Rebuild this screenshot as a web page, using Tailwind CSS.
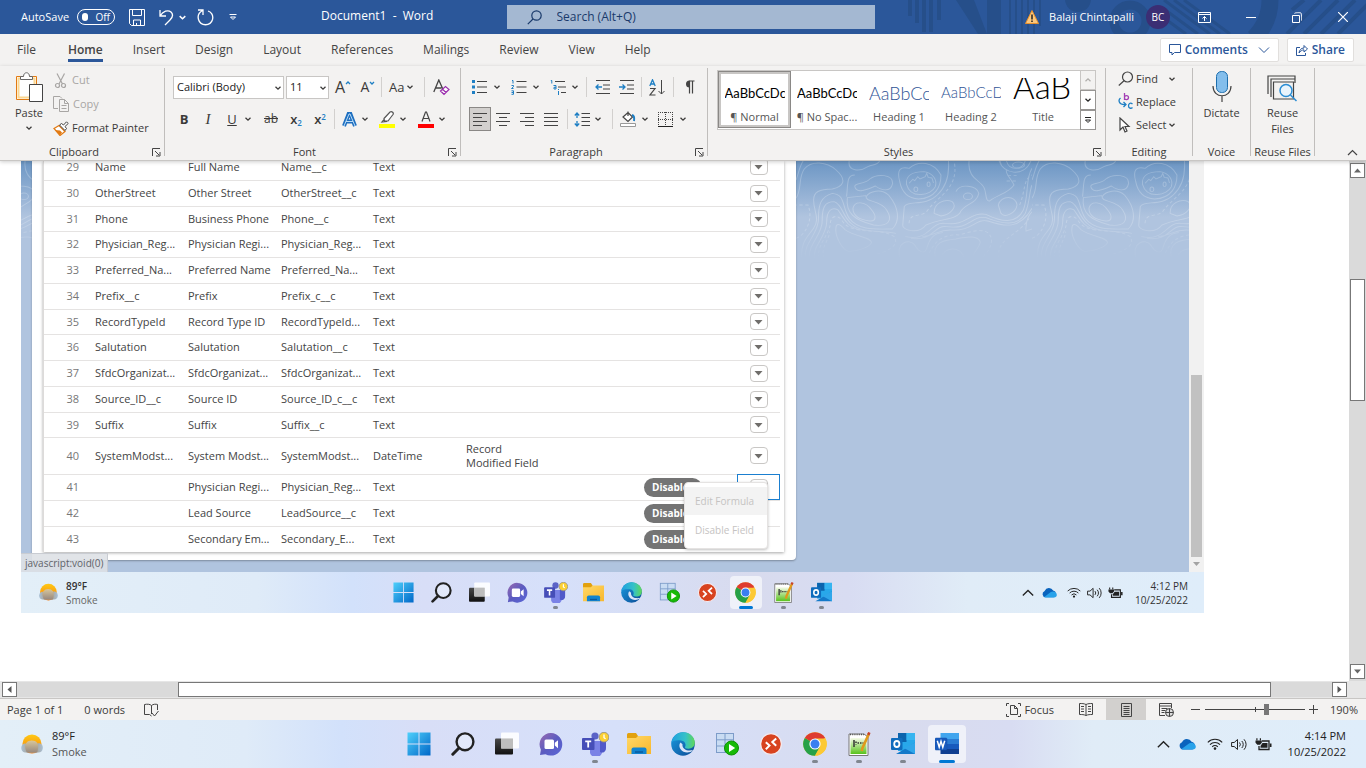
<!DOCTYPE html>
<html lang="en">
<head>
    <meta charset="UTF-8">
    <meta name="viewport" content="width=device-width, initial-scale=1.0">
    <title>Document1 - Word</title>
    <script src="https://cdn.jsdelivr.net/npm/@tailwindcss/browser@4"></script>
</head>
<body class="flex flex-col h-screen overflow-hidden bg-white text-[#3b3a39] text-[11px] leading-4 font-['Open_Sans','Noto_Sans',sans-serif]">

    <!-- Shared icons -->
    <svg class="absolute w-0 h-0" aria-hidden="true">
        <defs>
            <linearGradient id="g-win" x1="0" y1="0" x2="1" y2="1"><stop offset="0" stop-color="#4fd0fb"/><stop offset="1" stop-color="#0067c8"/></linearGradient>
            <linearGradient id="g-dark" x1="0" y1="0" x2="0" y2="1"><stop offset="0" stop-color="#4a4a4a"/><stop offset="1" stop-color="#111"/></linearGradient>
            <linearGradient id="g-chat" x1="0" y1="0" x2="1" y2="1"><stop offset="0" stop-color="#9a6bb0"/><stop offset="0.5" stop-color="#5b5bc0"/><stop offset="1" stop-color="#5a67d8"/></linearGradient>
            <linearGradient id="g-folder" x1="0" y1="0" x2="1" y2="1"><stop offset="0" stop-color="#ffd868"/><stop offset="1" stop-color="#f8b72c"/></linearGradient>
            <linearGradient id="g-edge1" x1="0" y1="0" x2="1" y2="0"><stop offset="0" stop-color="#1f9fe0"/><stop offset="0.6" stop-color="#35c1c8"/><stop offset="1" stop-color="#5fd858"/></linearGradient>
            <linearGradient id="g-edge2" x1="0" y1="0" x2="1" y2="1"><stop offset="0" stop-color="#1b9de2"/><stop offset="1" stop-color="#0c4a94"/></linearGradient>
            <linearGradient id="g-npp" x1="0" y1="0" x2="0" y2="1"><stop offset="0" stop-color="#f6fbe8"/><stop offset="1" stop-color="#57c21c"/></linearGradient>
            <linearGradient id="g-sun" x1="0" y1="0" x2="0" y2="1"><stop offset="0" stop-color="#ffc914"/><stop offset="1" stop-color="#f47c10"/></linearGradient>
            <linearGradient id="g-cloud" x1="0" y1="0" x2="0" y2="1"><stop offset="0" stop-color="#d8c79c"/><stop offset="1" stop-color="#97887f"/></linearGradient>
            <linearGradient id="g-mist" x1="0" y1="0" x2="1" y2="0"><stop offset="0" stop-color="#a9c0d6"/><stop offset="0.3" stop-color="#a9a69c"/><stop offset="0.7" stop-color="#a9a69c"/><stop offset="1" stop-color="#a9c0d6"/></linearGradient>
        </defs>
        <symbol id="chev" viewBox="0 0 8 8"><path d="M1.5 2.8 4 5.2 6.5 2.8" fill="none" stroke="currentColor" stroke-width="1.3"/></symbol>
        <symbol id="launch" viewBox="0 0 9 9"><path d="M.5 8V.5H8M3 3l4 4M8 4v4H4" fill="none" stroke="#444" stroke-width="1"/></symbol>
        <symbol id="start" viewBox="0 0 24 24"><path d="M.5.5h11v11H.5zM12.5.5h11v11h-11zM.5 12.5h11v11H.5zM12.5 12.5h11v11h-11z" fill="url(#g-win)"/></symbol>
        <symbol id="find" viewBox="0 0 24 24"><circle cx="14" cy="9.8" r="8.4" fill="#eef3fd" fill-opacity=".5" stroke="#222" stroke-width="2.4"/><path d="M8 16 1.8 22.2" stroke="#222" stroke-width="3" stroke-linecap="round"/></symbol>
        <symbol id="tasks" viewBox="0 0 24 24"><rect y="6.500" width="18" height="16" rx="1" fill="url(#g-dark)"/><rect x="6" y=".5" width="18" height="16" rx="1" fill="#fff" fill-opacity=".9"/><rect x="6" y="6.500" width="12" height="10" fill="#bdbdbd"/></symbol>
        <symbol id="chat" viewBox="0 0 24 24"><path d="M12 1a11.300 11.300 0 1 1-5.500 21.200L1 23l.9-5.300A11.300 11.300 0 0 1 12 1z" fill="url(#g-chat)"/><rect x="5.500" y="7.500" width="9.500" height="9.500" rx="1.500" fill="#fff"/><path d="m15.800 10.800 3.200-2.600v8l-3.200-2.600z" fill="#fff"/></symbol>
        <symbol id="teams" viewBox="0 0 28 24"><circle cx="14" cy="4" r="3.600" fill="#5b63c7"/><path d="M9 9h12v8a6 6 0 0 1-12 4z" fill="#7a82e6"/><path d="M19 9h6v7a4 4 0 0 1-6 4z" fill="#5059c9"/><rect x="1" y="6" width="12.500" height="12" rx="1" fill="#464eb8"/><path d="M4.200 9.300h6M7.200 9.300v6.200" stroke="#fff" stroke-width="1.800"/><circle cx="23" cy="5.200" r="4.900" fill="#fbd034" stroke="#8d8a86" stroke-width=".8"/><path d="M23 2.500v3.200l1.600 1" stroke="#fff" stroke-width="1.300" fill="none"/></symbol>
        <symbol id="folder" viewBox="0 0 24 24"><path d="M0 2.500a1.500 1.500 0 0 1 1.500-1.500H9l2 3v4H0z" fill="#e2a10f"/><path d="M0 6h9l2-2h13v18H0z" fill="url(#g-folder)"/><path d="M4.500 22v-4.500a2 2 0 0 1 2-2h11a2 2 0 0 1 2 2V22z" fill="#1184d0"/><path d="M8 20h8" stroke="#0a5a9e" stroke-width="1.500"/></symbol>
        <symbol id="edge" viewBox="0 0 24 24"><circle cx="12" cy="12" r="11.800" fill="url(#g-edge2)"/><path d="M.5 10.500C1.500 4.500 6 .2 12 .2c7 0 11.800 5 11.800 10.300 0 4-3 6.200-6.300 6.200-2.800 0-4-1-3.400-2 .9-1.400.8-5.600-4-6.300C5.800 7.900 2 8.300.5 10.500z" fill="url(#g-edge1)"/><path d="M9.500 10.500c-2 2-1.500 7 3 9.200 3.200 1.500 7 .8 9.700-1.400-1.200-.2-3 .4-5.200.1-3.500-.5-6-3.200-5.500-6.200z" fill="#dbe4f8"/></symbol>
        <symbol id="server" viewBox="0 0 24 24"><rect x="1.500" y="1.500" width="17" height="19" fill="#c9dcf3" stroke="#7d9cc9"/><path d="M1.500 7.800h17M1.500 14h17M10 1.500v19" stroke="#7d9cc9"/><circle cx="16.500" cy="16" r="7" fill="#16ba06" stroke="#0c9103"/><path d="M14 12v8l6.200-4z" fill="#fff"/></symbol>
        <symbol id="rdp" viewBox="0 0 24 24"><circle cx="12" cy="12" r="10.400" fill="#d8431f" stroke="#f3e9ee" stroke-width="1.300"/><path d="m6.800 10.200 3.700 3.400-3.700 3.600M17.200 6.500l-3.900 3.600 3.900 3.600" fill="none" stroke="#fff" stroke-width="2"/></symbol>
        <symbol id="chrome" viewBox="0 0 24 24"><circle cx="12" cy="12" r="11.800" fill="#fcc934"/><path d="M12 12 1.780 6.100A11.800 11.800 0 0 1 22.200 6.100z" fill="#de3b2f"/><path d="M12 12 1.780 6.100A11.800 11.800 0 0 0 12 23.800l5-9z" fill="#26a148"/><path d="M12 6.500h10.400a11.800 11.800 0 0 1-10.400 17.300l5-9z" fill="#fcc934"/><circle cx="12" cy="12" r="5.600" fill="#fff"/><circle cx="12" cy="12" r="4.500" fill="#3a7ff0"/></symbol>
        <symbol id="notepad" viewBox="0 0 24 24"><path d="M2 2h15l4 3v18.500H2z" fill="#fff" stroke="#777"/><path d="M3.500 6h16v16h-16z" fill="url(#g-npp)"/><path d="M3 2.500h14" stroke="#555" stroke-width="1.500" stroke-dasharray="1 1.200"/><path d="M7 8v7" stroke="#333" stroke-width="1.500"/><path d="M9 9.500v3M10.500 11h6" fill="none" stroke="#333" stroke-width="1.500" stroke-dasharray="1.500 1"/><path d="M22 1.500 15.500 16l-.8 3" stroke="#e09a1c" stroke-width="2.600" fill="none"/><path d="m21.200 2.800 1.200-2.300" stroke="#c7432b" stroke-width="2.600"/></symbol>
        <symbol id="outlook" viewBox="0 0 24 24"><path d="M7 1h17v18H7z" fill="#28a8ea"/><path d="M7 1h8.500v9H7z" fill="#0b64ad"/><path d="M15.500 1H24v7h-8.500z" fill="#36b4f0"/><path d="M5 22h19V10.500l-9.500 6z" fill="#1479c9"/><path d="M24 10.500V22L13 16z" fill="#2fa6ea"/><rect y="6" width="11.500" height="12" rx="1" fill="#0f6cbd"/><ellipse cx="5.800" cy="12" rx="2.600" ry="3" fill="none" stroke="#fff" stroke-width="1.800"/></symbol>
        <symbol id="word" viewBox="0 0 24 24"><path d="M5.500 1H24v6H5.500z" fill="#41a5ee"/><path d="M5.500 7H24v5H5.500z" fill="#2b7cd3"/><path d="M5.500 12H24v5H5.500z" fill="#185abd"/><path d="M5.500 17H24v5H5.500z" fill="#103f91"/><rect y="6" width="12" height="12" rx="1" fill="#185abd" stroke="#1450a8" stroke-width=".5"/><path d="m2.300 8.800 1.900 6.300L6 9.300l1.800 5.800 1.900-6.300" fill="none" stroke="#fff" stroke-width="1.500"/></symbol>
        <symbol id="weather" viewBox="0 0 24 22"><circle cx="12.500" cy="10.500" r="10" fill="url(#g-sun)"/><path d="M5 19.500a5 5 0 0 1-.5-9.500q2 0 3.500 1h8.500q1-1.500 4-1.200a5 5 0 0 1-1.300 9.700z" fill="url(#g-mist)"/><path d="M7 19.500C5.500 15 4.500 12.500 6.500 9.500a7 6.500 0 0 1 11.500 0c1.500 3 1 6 0 10z" fill="url(#g-cloud)"/></symbol>
        <symbol id="up" viewBox="0 0 12 12"><path d="m.8 8.500 5.200-5 5.200 5" fill="none" stroke="#222" stroke-width="1.300"/></symbol>
        <symbol id="onedrive" viewBox="0 0 17 12"><path d="M4 11.500A3.800 3.800 0 0 1 3 4.200a5.300 5.300 0 0 1 9.600-.4 4 4 0 0 1 .6 7.700z" fill="#0a63bd"/><path d="M2.500 11 10 5.500c3-1.800 6.800.3 6.800 3.300 0 1.800-1.400 2.800-3 2.800H4c-.8 0-1.300-.3-1.500-.6z" fill="#28a2ea"/></symbol>
        <symbol id="wifi" viewBox="0 0 16 12"><path d="M.8 4.300a10.200 10.200 0 0 1 14.400 0M3 6.600a7 7 0 0 1 10 0M5.200 8.800a4 4 0 0 1 5.600 0" fill="none" stroke="#222" stroke-width="1.100"/><circle cx="8" cy="10.600" r="1.300" fill="#222"/></symbol>
        <symbol id="sound" viewBox="0 0 16 12"><path d="M.6 4h2.600L6.500 1v10L3.200 8H.6zM8.500 4a3 3 0 0 1 0 4M10.800 2.500a5 5 0 0 1 0 7M13 .8a7.500 7.500 0 0 1 0 10.400" fill="none" stroke="#222" stroke-width="1"/></symbol>
        <symbol id="battery" viewBox="0 0 17 13"><path d="M7 3h7v8.500H4V8" fill="none" stroke="#222" stroke-width="1.300"/><path d="M7.500 5h5v4.700H5.500V8z" fill="#222"/><path d="M14.800 5.500h1.700v3.500h-1.700zM.5 2.500h6.300v2.300L5 6.800H2.300L.5 4.800zM1.300.3h1.200v2H1.300zM4.800.3H6v2H4.800z" fill="#222"/></symbol>
    </svg>

    <!-- Title bar -->
    <header class="relative flex items-center shrink-0 h-[34px] bg-[#2b579a] text-white">
        <svg class="absolute right-0 top-0" width="486" height="34" fill="none" stroke="#264f8a" aria-hidden="true">
            <path d="M30 0v16M37 0v23M44 0v32M51 0v32M59 0v20" stroke-width="4"/>
            <path d="M76 0h18l13 34h-9zM107 0h14v34h-14z" fill="#264f8a" stroke="none"/>
            <path d="M130 0v34M136 0v34M142 0v34M148 0v34M154 0v34M160 0v26" stroke-width="2"/>
            <circle cx="198" cy="-1" r="13" fill="#264f8a" stroke="none"/>
            <circle cx="250" cy="21" r="16" stroke-width="9"/>
            <path d="m284 0 46 34M294 0l46 34M304 0l46 34M284 9l34 25M284 18l22 16" stroke-width="3"/>
            <path d="M390 0c0 16-6 28-16 38" stroke-width="17"/>
            <path d="m424 0-12 10M441 0l-34 34M458 0l-34 34M475 0l-34 34M488 4l-30 30" stroke-width="4"/>
        </svg>
        <div class="relative flex items-center flex-1 pl-[21px]">
            <span>AutoSave</span>
            <button class="flex items-center gap-2 w-[38px] h-4 ml-2 px-1 text-[10px] leading-3 border border-white rounded-full"><span class="w-2 h-2 bg-white rounded-full"></span>Off</button>
            <button class="ml-[14px]" aria-label="Save"><svg width="16" height="17" fill="none" stroke="#fff"><path d="M.5.5h15v16h-13l-2-2zM3.500.5v6h9v-6M4.500 16v-5h7v5M7.500 16v-2"/></svg></button>
            <button class="ml-[14px]" aria-label="Undo"><svg width="15" height="17" fill="none" stroke="#fff" stroke-width="1.300"><path d="M1 1v6h6M1 7c3-5 8-6.500 11-4 3 3 1.500 5.500-1 8l-5 5"/></svg></button>
            <button class="ml-1" aria-label="Undo history"><svg width="9" height="9"><use href="#chev"/></svg></button>
            <button class="ml-[10px]" aria-label="Repeat"><svg width="17" height="17" fill="none" stroke="#fff" stroke-width="1.300"><path d="M1 1h5v5M5.500 1.500C2 3.500.5 7 1.500 10.500c2 7 12 7 14 0 1-4-1-7.500-4.500-8.500"/></svg></button>
            <button class="ml-[15px]" aria-label="Customize Quick Access Toolbar"><svg width="8" height="9" fill="none" stroke="#fff"><path d="M.5 1.500h7M1.500 4 4 6.500 6.500 4z"/></svg></button>
            <h1 class="ml-[84px] -mt-0.5 whitespace-pre text-[12px]">Document1  -  Word</h1>
        </div>
        <label class="relative flex items-center w-[368px] h-6 ml-3 bg-[#a4b8d2]">
            <svg class="ml-5" width="15" height="15" fill="none" stroke="#1a3a6b" stroke-width="1.200"><circle cx="9.500" cy="5.500" r="4.700"/><path d="M6 9 .8 14.200"/></svg>
            <input type="text" placeholder="Search (Alt+Q)" aria-label="Search" class="flex-1 ml-[15px] text-[12px] outline-none placeholder:text-[#1a3a6b]">
        </label>
        <div class="relative flex items-center flex-1 justify-end pr-[18px]">
            <svg width="14" height="14"><path d="M7 .5 13.500 13.500H.5z" fill="#fbc77d" stroke="#e8912d"/><path d="M7 4.500v5M7 10.500v1.500" stroke="#222" stroke-width="1.500"/></svg>
            <span class="ml-[10px]">Balaji Chintapalli</span>
            <span class="flex items-center justify-center w-6 h-6 ml-3 text-[10px] bg-[#3b2e74] rounded-full">BC</span>
            <button class="ml-7" aria-label="Ribbon display options"><svg width="13" height="11" fill="none" stroke="#fff"><path d="M.5.5h12v10H.5zM.5 2.500h12M6.500 9V4.500M4.500 6.500l2-2 2 2"/></svg></button>
            <button class="ml-[35px]" aria-label="Minimize"><svg width="10" height="11" stroke="#fff"><path d="M0 5.500h10"/></svg></button>
            <button class="ml-9" aria-label="Restore"><svg width="10" height="11" fill="none" stroke="#fff"><path d="M.5 3.500h7v7h-7z"/><path d="M2.500 1.500c0-1 6-1 6.500-.5s.5 5.500.5 7.500"/></svg></button>
            <button class="ml-9" aria-label="Close"><svg width="10" height="10" stroke="#fff" stroke-width="1.200"><path d="m0 0 10 10M10 0 0 10"/></svg></button>
        </div>
    </header>

    <!-- Ribbon tabs -->
    <nav class="flex items-center shrink-0 h-8 pl-[17px] pr-3 bg-[#f3f2f1] text-[12px] text-[#444]">
        <div class="flex flex-1 gap-[30px]">
            <a href="#">File</a>
            <a href="#" class="ml-0.5 font-semibold border-b-3 border-[#2b579a] pb-px -mb-1">Home</a>
            <a href="#">Insert</a>
            <a href="#">Design</a>
            <a href="#">Layout</a>
            <a href="#">References</a>
            <a href="#">Mailings</a>
            <a href="#">Review</a>
            <a href="#">View</a>
            <a href="#">Help</a>
        </div>
        <button class="flex items-center h-6 px-2 font-semibold text-[#2b579a] bg-white border border-[#e1dfdd] rounded-xs">
            <svg width="12" height="12" fill="none" stroke="#2b579a"><path d="M.5.5h11v8H5.500l-2.500 2.500V8.500H.5z"/></svg>
            <span class="ml-1">Comments</span>
            <svg class="ml-2.5" width="12" height="8" fill="none" stroke="#2b579a"><path d="m1 1.500 5 5 5-5"/></svg>
        </button>
        <button class="flex items-center h-6 ml-2 px-2 font-semibold text-[#2b579a] bg-white border border-[#e1dfdd] rounded-xs">
            <svg width="12" height="12" fill="none" stroke="#2b579a"><path d="M4 3.500H.5v8h9V9M3 9c.5-3 2-5 5-5V1.500L11.500 5 8 8V5.800C6 6 4.500 7 3 9z"/></svg>
            <span class="ml-1">Share</span>
        </button>
    </nav>

    <!-- Ribbon -->
    <section class="relative z-10 flex shrink-0 h-[95px] pt-0.5 pb-1 bg-[#f3f2f1] border-b border-[#c8c6c4] shadow-[0_1px_4px_rgba(0,0,0,0.2)]">
        <!-- Clipboard -->
        <div class="flex flex-col justify-between w-[165px] border-r border-[#c0bebc]">
            <div class="flex pl-3">
                <button class="flex flex-col items-center w-[34px] pt-1">
                    <svg width="28" height="30" fill="none"><path d="M1.500 4.500h20v23h-20z" fill="#fff" stroke="#e27a13"/><path d="M3.500 6.500h16v19h-16z" stroke="#fbd892" stroke-width="2"/><path d="M5.500 7.500v-3h3c0-5 6-5 6 0h3v3z" fill="#fff" stroke="#666"/><path d="M14.500 12.500h13v17h-13z" fill="#fff" stroke="#444"/></svg>
                    <span class="mt-[3px]">Paste</span>
                    <svg class="mt-[3px]" width="8" height="8"><use href="#chev"/></svg>
                </button>
                <div class="flex flex-col ml-[7px]">
                    <button class="flex items-center gap-1 h-6 text-[#a8a6a4]"><svg width="15" height="17" fill="none" stroke="#a8a6a4" stroke-width="1.200"><path d="M4 1.500 9.500 12M11.500 1.500 6 12"/><circle cx="4.500" cy="13.500" r="2"/><circle cx="10.500" cy="13.500" r="2"/></svg>Cut</button>
                    <button class="flex items-center gap-1 h-6 text-[#a8a6a4]"><svg width="16" height="16" fill="none" stroke="#a8a6a4"><path d="M5 12.500H.5V.5H7l2 2M6.500 3.500h5l4 4v8h-9zM11.500 3.500v4h4M8.500 9.500h5M8.500 12.500h5"/></svg>Copy</button>
                    <button class="flex items-center gap-[3px] h-6"><svg width="16" height="15" fill="none"><path d="M1 7.500 6 4.500l6 6-5 4z" fill="#fff" stroke="#e27a13" stroke-width="1.300"/><path d="m2 9 5 .5 2 2-2 2.500z" fill="#e27a13"/><path d="m6.500 4 2-1.500 2 1.500L13.500.8l1.700 1.700L12 5.500l1.500 2-1.500 2z" fill="#fff" stroke="#444"/></svg>Format Painter</button>
                </div>
            </div>
            <div class="flex items-center -mb-1 pr-[3px]"><span class="flex-1 pr-1 text-center">Clipboard</span><button aria-label="Clipboard settings"><svg width="9" height="9"><use href="#launch"/></svg></button></div>
        </div>

        <!-- Font -->
        <div class="flex flex-col justify-between w-[296px] border-r border-[#c0bebc]">
            <div class="pl-[7px]">
                <div class="flex items-center h-6 mt-[7px] text-[14px]">
                    <label class="relative ml-px"><select aria-label="Font" class="appearance-none w-[111px] h-[23px] px-[3px] text-[11px] bg-white border border-[#c8c6c4] text-[#222]"><option>Calibri (Body)</option></select><svg class="absolute right-0.5 top-2" width="8" height="8"><use href="#chev"/></svg></label>
                    <label class="relative ml-0.5"><select aria-label="Font size" class="appearance-none w-[43px] h-[23px] px-[3px] text-[11px] bg-white border border-[#c8c6c4] text-[#222]"><option>11</option></select><svg class="absolute right-0.5 top-2" width="8" height="8"><use href="#chev"/></svg></label>
                    <button class="flex justify-center w-6 ml-0.5 text-[16px]">A<svg width="6" height="8" fill="none" stroke="#1e7fc4" stroke-width="1.300"><path d="m1 5 2-2 2 2"/></svg></button>
                    <button class="flex justify-center w-6 ml-px">A<svg width="6" height="8" fill="none" stroke="#1e7fc4" stroke-width="1.300"><path d="m1 3 2 2 2-2"/></svg></button>
                    <span class="w-px h-5 ml-px bg-[#d2d0ce]"></span>
                    <button class="flex items-center ml-[7px] text-[13px]">Aa<svg class="ml-0.5" width="8" height="8"><use href="#chev"/></svg></button>
                    <span class="w-px h-5 ml-2.5 bg-[#d2d0ce]"></span>
                    <button class="flex justify-center w-6 ml-1" aria-label="Clear formatting"><svg width="17" height="17" fill="none"><path d="m.8 13 5-12 4 9M2.500 9h6" stroke="#444" stroke-width="1.300"/><path d="m7.500 12 5-4.500 3.500 3-5 4.800zM9.500 10.300l3.500 3.200" fill="#fff" stroke="#9b2fae" stroke-width="1.200"/></svg></button>
                </div>
                <div class="flex items-center h-6 mt-2 text-[13px]">
                    <button class="w-6 font-bold">B</button>
                    <button class="w-6 italic font-['Liberation_Serif',serif] text-[15px]">I</button>
                    <button class="w-6 underline">U</button>
                    <svg width="8" height="8"><use href="#chev"/></svg>
                    <button class="w-6 ml-[7px] text-[12px] line-through">ab</button>
                    <button class="w-6 ml-px font-semibold">x<sub class="text-[8px] text-[#1e7fc4]">2</sub></button>
                    <button class="w-6 font-semibold">x<sup class="text-[8px] text-[#1e7fc4]">2</sup></button>
                    <span class="w-px h-5 mx-0.5 bg-[#d2d0ce]"></span>
                    <button class="flex justify-center w-6" aria-label="Text effects"><svg width="15" height="15" fill="none"><path d="M2 14 7 1h1l5 13M4 9.500h7" stroke="#1e6fc0" stroke-width="4"/><path d="M2 14 7 2h1l5 12M4 9.500h7" stroke="#b9dcf7" stroke-width="1"/></svg></button>
                    <svg width="8" height="8"><use href="#chev"/></svg>
                    <button class="flex justify-center w-6 ml-1.5" aria-label="Highlight colour"><svg width="16" height="17" fill="none"><path d="M0 13h16v4H0z" fill="#ff0"/><path d="m5 7.500 6-6.500c2-1 4 1 3 2.500L9 10H5.500zM5.500 8 3 11l5-.5" fill="#fff" stroke="#555" stroke-width="1.200"/></svg></button>
                    <svg width="8" height="8"><use href="#chev"/></svg>
                    <button class="flex justify-center w-6 ml-[7px]" aria-label="Font colour"><svg width="16" height="17" fill="none"><path d="M0 13h16v4H0z" fill="red"/><path d="M4 10.500 7.500 1h1L12 10.500M5.200 7.500h5.600" stroke="#444" stroke-width="1.200"/></svg></button>
                    <svg width="8" height="8"><use href="#chev"/></svg>
                </div>
            </div>
            <div class="flex items-center -mb-1 pr-[3px]"><span class="flex-1 pr-1 text-center">Font</span><button aria-label="Font settings"><svg width="9" height="9"><use href="#launch"/></svg></button></div>
        </div>

        <!-- Paragraph -->
        <div class="flex flex-col justify-between w-[247px] border-r border-[#c0bebc]">
            <div class="pl-[7px]">
                <div class="flex items-center h-6 mt-[7px]">
                    <button class="flex justify-center w-6" aria-label="Bullets"><svg width="16" height="16"><path d="M0 1h3v3H0zM0 6.500h3v3H0zM0 12h3v3H0z" fill="#1e7fc4"/><path d="M5 2.500h10M5 8h10M5 13.500h10" stroke="#444"/></svg></button>
                    <svg class="ml-px" width="8" height="8"><use href="#chev"/></svg>
                    <button class="flex justify-center w-6 ml-1.5" aria-label="Numbering"><svg width="16" height="16"><path d="M5.500 2.500h10M5.500 8h10M5.500 13.500h10" stroke="#444"/><path d="M1 1.500h1v3M.5 6.500h2v1.200L.5 9.500h2M.5 11.800h2v3.500h-2M.5 13.500h2" fill="none" stroke="#1e7fc4"/></svg></button>
                    <svg class="ml-px" width="8" height="8"><use href="#chev"/></svg>
                    <button class="flex justify-center w-6 ml-1.5" aria-label="Multilevel list"><svg width="16" height="16"><path d="M5 2.500h10M8 8h8M11 13.500h5" stroke="#444"/><path d="M.8 1.500h1v3M3.500 6.500h2.500v3.500H4V8.300h2M8.500 12v4M8.500 10v1" fill="none" stroke="#1e7fc4"/></svg></button>
                    <svg class="ml-px" width="8" height="8"><use href="#chev"/></svg>
                    <span class="w-px h-5 ml-[7px] mr-[3px] bg-[#d2d0ce]"></span>
                    <button class="flex justify-center w-6" aria-label="Decrease indent"><svg width="15" height="14" fill="none"><path d="M1 .5h14M8 5h7M8 9h7M1 13.500h14" stroke="#444"/><path d="M7 7H1M3.500 4.500 1 7l2.500 2.500" stroke="#1e7fc4" stroke-width="1.300"/></svg></button>
                    <button class="flex justify-center w-6" aria-label="Increase indent"><svg width="15" height="14" fill="none"><path d="M1 .5h14M8 5h7M8 9h7M1 13.500h14" stroke="#444"/><path d="M0 7h6M3.500 4.500 6 7 3.500 9.500" stroke="#1e7fc4" stroke-width="1.300"/></svg></button>
                    <span class="w-px h-5 mx-[3px] bg-[#d2d0ce]"></span>
                    <button class="flex justify-center w-6" aria-label="Sort"><svg width="16" height="17" fill="none"><path d="M.8 7 3.500.8 6.200 7M1.800 5h3.500" stroke="#1e7fc4" stroke-width="1.300"/><path d="M1 9.500h5L1 16h5.500" stroke="#444" stroke-width="1.200"/><path d="M12.500 1v14M9.500 12l3 3 3-3" stroke="#444"/></svg></button>
                    <span class="w-px h-5 ml-1 mr-[3px] bg-[#d2d0ce]"></span>
                    <button class="flex justify-center w-6" aria-label="Show marks"><svg width="11" height="14"><path d="M5 1h5.500M5.500 1v12.500M8.500 1v12.500" stroke="#444" stroke-width="1.200"/><path d="M5.500.5v7a3.500 3.500 0 0 1 0-7z" fill="#444"/></svg></button>
                </div>
                <div class="flex items-center h-6 mt-2 ml-px">
                    <button class="flex items-center justify-center w-[22px] h-6 bg-[#d2d0ce] border border-[#8a8886]" aria-label="Align left"><svg width="15" height="13" stroke="#444"><path d="M0 .5h14M0 4.500h9M0 8.500h14M0 12.500h9"/></svg></button>
                    <button class="flex justify-center w-6" aria-label="Centre"><svg width="15" height="13" stroke="#444"><path d="M0 .5h14M3 4.500h8M0 8.500h14M3 12.500h8"/></svg></button>
                    <button class="flex justify-center w-6" aria-label="Align right"><svg width="15" height="13" stroke="#444"><path d="M0 .5h14M5 4.500h9M0 8.500h14M5 12.500h9"/></svg></button>
                    <button class="flex justify-center w-6" aria-label="Justify"><svg width="15" height="13" stroke="#444"><path d="M0 .5h14M0 4.500h14M0 8.500h14M0 12.500h14"/></svg></button>
                    <span class="w-px h-5 ml-1 mr-0.5 bg-[#d2d0ce]"></span>
                    <button class="flex justify-center w-6" aria-label="Line spacing"><svg width="16" height="15" fill="none"><path d="M7.500 1.500H16M7.500 5.500H16M7.500 9.500H16M7.500 13.500H16" stroke="#444"/><path d="M3 1v5M3 9v5M.8 3.500 3 1l2.200 2.500M.8 11.500 3 14l2.200-2.500" stroke="#1e7fc4" stroke-width="1.300"/></svg></button>
                    <svg width="8" height="8"><use href="#chev"/></svg>
                    <span class="w-px h-5 ml-2.5 mr-[3px] bg-[#d2d0ce]"></span>
                    <button class="flex justify-center w-6" aria-label="Shading"><svg width="17" height="16" fill="none"><path d="M.5 12.500h15v3H.5z" fill="#fff" stroke="#999"/><path d="m3 6 5-4.500 4.500 4.500L8 10.500zM8 5V.5" fill="#fff" stroke="#444" stroke-width="1.200"/><path d="M12 4c2 .5 2.500 3 2 6" stroke="#1e7fc4" stroke-width="2"/></svg></button>
                    <svg class="ml-px" width="8" height="8"><use href="#chev"/></svg>
                    <button class="flex justify-center w-6 ml-1" aria-label="Borders"><svg width="15" height="15" fill="none"><path d="M.5 0v14M14.500 0v14M7.500 0v14M0 .5h15M0 7.500h15" stroke="#444" stroke-dasharray="1 1"/><path d="M0 14.500h15" stroke="#222"/></svg></button>
                    <svg class="ml-0.5" width="8" height="8"><use href="#chev"/></svg>
                </div>
            </div>
            <div class="flex items-center -mb-1 pr-[3px]"><span class="flex-1 pr-1 text-center">Paragraph</span><button aria-label="Paragraph settings"><svg width="9" height="9"><use href="#launch"/></svg></button></div>
        </div>

        <!-- Styles -->
        <div class="flex flex-col justify-between w-[398px] border-r border-[#c0bebc]">
            <div class="flex w-[379px] h-[60px] mt-0.5 ml-[9px] bg-white border border-[#c8c6c4]">
                <button class="flex flex-col justify-between w-[73px] h-[57px] pt-[11px] px-0.5 border-[3px] border-[#c8c6c4] outline-1 -outline-offset-1 outline-[#8a8886]"><span class="w-[60px] mx-auto overflow-hidden text-left text-black text-[13px] font-['Lato',sans-serif]">AaBbCcDc</span><span class="w-full text-center text-[#555]">¶ Normal</span></button>
                <button class="flex flex-col justify-between items-center w-[72px] h-[57px] pt-[14px] pb-[3px]"><span class="w-[60px] overflow-hidden text-left text-black text-[13px] font-['Lato',sans-serif]">AaBbCcDc</span><span class="text-[#555]">¶ No Spac...</span></button>
                <button class="flex flex-col justify-between items-center w-[72px] h-[57px] pt-3 pb-[3px]"><span class="w-[60px] overflow-hidden text-left text-[#2f5496] text-[18px] font-light leading-5 font-['Lato',sans-serif]">AaBbCc</span><span class="text-[#555]">Heading 1</span></button>
                <button class="flex flex-col justify-between items-center w-[72px] h-[57px] pt-[11px] pb-[3px]"><span class="w-[60px] overflow-hidden text-left text-[#2f5496] text-[15px] font-light leading-5 font-['Lato',sans-serif]">AaBbCcD</span><span class="text-[#555]">Heading 2</span></button>
                <button class="flex flex-col justify-between items-center w-[72px] h-[57px] pt-[7px] pb-[3px]"><span class="flex items-end w-[60px] h-6 overflow-hidden text-black text-[33px] font-light leading-8 font-['Lato',sans-serif]">AaB</span><span class="text-[#555]">Title</span></button>
                <div class="flex flex-col w-4 h-[60px] -mt-px -mr-px ml-auto bg-[#f3f2f1] text-[#222]">
                    <button class="flex items-center justify-center flex-1 text-[#b0aeac] border border-[#c8c6c4]" aria-label="Previous styles"><svg class="rotate-180" width="8" height="8"><use href="#chev"/></svg></button>
                    <button class="flex items-center justify-center flex-1 bg-white border border-[#979593]" aria-label="Next styles"><svg width="8" height="8"><use href="#chev"/></svg></button>
                    <button class="flex items-center justify-center flex-1 bg-white border border-[#979593]" aria-label="More styles"><svg width="8" height="8" fill="none" stroke="#222"><path d="M1 1.500h6M1.500 4 4 6.500 6.500 4z"/></svg></button>
                </div>
            </div>
            <div class="flex items-center -mb-1 pr-[3px]"><span class="flex-1 pr-1 text-center">Styles</span><button aria-label="Styles settings"><svg width="9" height="9"><use href="#launch"/></svg></button></div>
        </div>

        <!-- Editing -->
        <div class="flex flex-col justify-between w-[87px] border-r border-[#c0bebc]">
            <div class="flex flex-col -mt-px pl-3">
                <button class="flex items-center h-[23px]"><svg class="mr-0.5" width="16" height="16" fill="none" stroke="#444" stroke-width="1.200"><circle cx="9.500" cy="6" r="5"/><path d="M6 9.800.8 14.500"/></svg>Find<svg class="ml-2.5" width="8" height="8"><use href="#chev"/></svg></button>
                <button class="flex items-center h-[23px]"><svg class="mr-0.5" width="16" height="17" fill="none" stroke-width="1.300"><path d="M6.500 0v7M6.500 4.500c0-2.500 4-2.500 4 0s-4 3-4 0" stroke="#a33fb5"/><path d="M14.500 11c-2.500-2-4 0-4 1.700 0 2.500 2.500 3.300 4 1.800" stroke="#1e7fc4"/><path d="M2.500 5c-2.500 2-2 7 5 6.500M5.500 9l2.500 2.500L5.500 14" stroke="#1e7fc4"/></svg>Replace</button>
                <button class="flex items-center h-[23px]"><svg class="mr-0.5" width="16" height="16" fill="#fff" stroke="#444" stroke-width="1.200"><path d="M2 1v12l3-3 2 5 2-1-2-4.500h4z"/></svg>Select<svg class="ml-0.5" width="8" height="8"><use href="#chev"/></svg></button>
            </div>
            <span class="-mb-1 text-center">Editing</span>
        </div>

        <!-- Voice -->
        <div class="flex flex-col justify-between w-[58px] border-r border-[#c0bebc]">
            <button class="flex flex-col items-center pt-[3px]"><svg width="20" height="31" fill="none"><rect x="4.500" y=".5" width="11" height="21" rx="5" fill="#83beec" stroke="#1e6fae"/><path d="M1 15c0 13 18 13 18 0M10 25v6" stroke="#444" stroke-width="1.200"/></svg><span class="mt-[3px]">Dictate</span></button>
            <span class="-mb-1 text-center">Voice</span>
        </div>

        <!-- Reuse files -->
        <div class="flex flex-col justify-between w-[64px] border-r border-[#c0bebc]">
            <button class="flex flex-col items-center pt-[7px]"><svg width="31" height="28" fill="none" stroke="#444" stroke-width="1.200"><path d="M1 19V1h27v3M4 22V4h24v4M6.500 7h20v17h-20z"/><circle cx="19" cy="15.500" r="6" fill="#e9f4fc" stroke="#2a8dd4" stroke-width="1.500"/><path d="m23.500 20 6 6" stroke="#2a8dd4" stroke-width="1.500"/></svg><span class="mt-0.5">Reuse<br>Files</span></button>
            <span class="-mb-1 text-center whitespace-nowrap">Reuse Files</span>
        </div>
        <button class="self-end ml-auto mr-2" aria-label="Collapse the ribbon"><svg width="11" height="7" fill="none" stroke="#444" stroke-width="1.200"><path d="m1 6 4.500-4.500L10 6"/></svg></button>
    </section>

    <!-- Document -->
    <main class="flex flex-1 min-h-0">
        <div class="flex-1 min-w-0 overflow-hidden pl-[21px] pr-[145px]">
            <div class="relative text-[#444]">
                <!-- Pasted browser window -->
                <div class="relative flex h-[411px] overflow-hidden bg-[#b0c4df]">
                    <div class="absolute inset-x-0 top-0 h-14 bg-linear-to-b from-[#6c96c4] to-[#b0c4df]"></div>
                    <svg class="absolute inset-x-0 top-0 w-full" height="98" aria-hidden="true">
                        <defs>
                            <linearGradient id="fade" x1="0" y1="0" x2="0" y2="1"><stop offset="0.6" stop-color="#fff"/><stop offset="1" stop-color="#000"/></linearGradient>
                            <mask id="fademask"><rect width="100%" height="98" fill="url(#fade)"/></mask>
                            <pattern id="topo" x="67" y="0" width="236" height="98" patternUnits="userSpaceOnUse">
                                <g transform="scale(.3746 .3333) translate(-43 -18)" fill="none" stroke="#fff" stroke-width="2.700">
                                    <path d="M43 130C60 100 48 70 65 42 85 15 125 20 150 45 180 75 170 95 140 102 105 103 90 110 90 135 90 170 108 190 90 220 75 245 55 260 58 310"/>
                                    <path d="M43 75C50 55 52 35 62 18M185 18C180 50 215 50 235 35 248 28 262 30 266 18M178 125C182 85 178 60 200 60"/>
                                    <path d="M68 310C62 265 105 235 103 190 103 150 108 125 140 115 175 118 165 155 185 190 210 228 260 222 300 222 320 200 320 160 290 120 270 100 240 108 230 125 228 142 270 135 285 165 305 200 285 215 250 210 200 195 175 175 180 128L230 122"/>
                                    <path d="M80 310C72 270 115 240 113 195 113 160 118 140 145 140 168 150 165 180 190 205 215 235 260 225 310 235M93 310C85 275 125 245 125 200 125 165 140 155 155 165 170 185 175 215 215 225"/>
                                    <path d="M105 310C95 270 135 240 135 200 140 180 155 180 165 195 190 245 270 215 305 245 320 270 290 290 250 300M118 310C108 275 130 260 133 230M43 250C70 240 90 190 75 150L43 150" stroke-dasharray="9 7"/>
                                    <path d="M200 95C198 82 225 90 240 72 260 55 302 58 301 85 295 115 270 105 255 93 240 100 205 120 200 95zM195 160C200 135 230 140 245 165 260 185 255 200 240 198 215 195 195 185 195 160zM150 215C145 240 165 285 185 290 215 285 240 275 245 262 240 245 200 245 175 225 160 205 152 205 150 215z"/>
                                    <path d="M320 80C310 40 325 35 345 40 370 15 410 20 430 60 430 95 415 130 370 132 340 130 325 110 320 80zM338 88C335 60 355 50 385 50 410 55 420 75 415 95 405 120 350 135 338 88zM345 85l10-12 5 4 8-12 6 7 14-7 4-10 4 12 10 2 4 15"/>
                                    <ellipse cx="363" cy="103" rx="5" ry="7"/><ellipse cx="397" cy="88" rx="4" ry="7"/>
                                    <path d="M505 18C500 70 535 75 545 98 552 115 548 140 560 138 580 120 610 115 625 90 620 75 600 55 605 45 590 35 590 28 588 18M585 18C595 55 650 70 670 18M605 18C610 45 645 50 655 18"/>
                                    <ellipse cx="502" cy="124" rx="12" ry="10"/><ellipse cx="637" cy="30" rx="16" ry="9"/>
                                    <path d="M412 175C410 145 440 130 460 140 475 155 455 180 430 183zM583 150C590 120 630 120 633 150 630 175 600 190 590 175zM657 228C655 200 665 165 690 163 712 175 705 200 690 215zM470 110C480 85 525 90 531 115 525 150 490 145 480 175 465 195 430 190 390 210 370 240 325 225 328 210L332 155C340 135 390 155 420 120 450 90 452 50 450 18"/>
                                    <path d="M335 245C400 260 400 200 440 205 500 215 505 170 550 178 590 200 630 210 650 165 665 120 655 70 673 40M350 250C410 260 410 210 445 215 510 225 510 180 550 188 595 208 635 215 655 175 668 140 665 110 673 90M380 245C420 240 420 225 455 225 515 230 520 190 555 198 600 215 640 225 673 160"/>
                                    <path d="M345 205C345 170 380 190 395 165 420 125 480 100 465 18M395 310C405 260 440 235 480 240 530 220 565 220 565 260 560 290 545 300 540 310M585 310C575 250 640 240 665 190M608 62h24M605 78h28M640 150C655 110 650 70 673 60" stroke-dasharray="9 7"/>
                                    <path d="M320 310C310 260 345 250 360 270 370 290 385 300 392 280 400 250 410 235 435 233M415 310C405 260 440 255 470 252 500 245 530 240 535 262 530 285 515 290 515 310M430 310C435 275 485 270 492 310"/>
                                </g>
                            </pattern>
                        </defs>
                        <rect width="100%" height="98" fill="url(#topo)" mask="url(#fademask)" opacity=".22"/>
                    </svg>

                    <div class="relative w-[764px] h-[399px] ml-[11px] pl-[11px] pr-3 bg-white rounded-br-sm shadow-[0_1px_2px_rgba(0,0,0,0.3)]">
                        <div class="h-[391px] overflow-hidden pr-1 border-l border-[#dddbda] shadow-[0_1px_3px_rgba(0,0,0,0.35)]">
                            <table class="w-full -mt-[7px] table-fixed border-collapse">
                                <colgroup>
                                    <col class="w-[43px]"><col class="w-[93px]"><col class="w-[93px]"><col class="w-[92px]"><col class="w-[93px]"><col class="w-[186px]"><col class="w-[93px]"><col>
                                </colgroup>
                                <tbody id="fields"></tbody>
                            </table>
                        </div>
                        <!-- Row menu -->
                        <div class="absolute left-[652px] top-[321px] w-[84px] h-[67px] pt-1 bg-white border border-[#e5e3e2] rounded-sm shadow-[0_1px_3px_rgba(0,0,0,0.25)] text-[#c5c3c2]">
                            <button class="block w-full h-[28px] pl-2.5 text-left text-[10px] bg-[#f3f3f3]">Edit Formula</button>
                            <button class="block w-full h-[30px] pl-2.5 text-left text-[10px]">Disable Field</button>
                        </div>
                    </div>

                    <div class="relative flex flex-col items-center w-[15px] ml-auto bg-[#f1f1f1]">
                        <div class="w-[11px] h-[182px] mt-auto bg-[#c1c1c1]"></div>
                        <svg class="mt-1 mb-[5px]" width="7" height="6"><path d="M0 1h7L3.500 5z" fill="#a3a3a3"/></svg>
                    </div>
                    <div class="absolute left-0 bottom-0 w-[87px] h-[19px] pl-1 text-[10px] leading-[18px] text-[#5f6368] bg-[#dee1e6]/90 border-t border-r border-[#c9ccd2]">javascript:void(0)</div>
                </div>

                <!-- Taskbar inside the picture -->
                <div class="grid grid-cols-[1fr_auto_1fr] items-center h-[41px] bg-[linear-gradient(90deg,#e3eff8_0%,#dfebf8_20%,#d2e1fb_28%,#d8def7_34%,#d6e0fa_45%,#d8dbee_62%,#d8dcf2_70%,#e0ecf7_80%,#dfedfa_100%)] text-[10px] leading-[14px] text-[#333]">
                    <div class="flex items-center pl-[17px]">
                        <svg width="20" height="19"><use href="#weather"/></svg>
                        <div class="ml-2"><div class="font-semibold">89°F</div><div class="text-[#666]">Smoke</div></div>
                    </div>
                    <div class="flex" id="taskbar-small"></div>
                    <div class="flex items-center justify-end pr-4">
                        <svg width="12" height="12"><use href="#up"/></svg>
                        <svg class="ml-2" width="15" height="11"><use href="#onedrive"/></svg>
                        <svg class="ml-2.5" width="14" height="11"><use href="#wifi"/></svg>
                        <svg class="ml-1.5" width="15" height="12"><use href="#sound"/></svg>
                        <svg class="ml-1.5" width="15" height="12"><use href="#battery"/></svg>
                        <div class="ml-3 text-right">4:12 PM<br>10/25/2022</div>
                    </div>
                </div>
            </div>
        </div>

        <!-- Vertical scrollbar -->
        <div class="flex flex-col w-[17px] py-0.5 pr-px pl-px bg-[#dadada]">
            <button class="flex items-center justify-center h-[15px] bg-white border border-[#777]" aria-label="Scroll up"><svg width="7" height="5"><path d="M0 4.500h7L3.500.5z" fill="#666"/></svg></button>
            <div class="h-[122px] mt-[101px] bg-white border border-[#777]"></div>
            <button class="flex items-center justify-center h-[15px] mt-auto bg-white border border-[#777]" aria-label="Scroll down"><svg width="7" height="5"><path d="M0 .5h7L3.500 4.500z" fill="#666"/></svg></button>
        </div>
    </main>

    <!-- Horizontal scrollbar -->
    <div class="flex items-center shrink-0 h-[17px] bg-[#e6e6e6]">
        <div class="flex items-center flex-1 h-[15px] ml-0.5 bg-[#dadada]">
            <button class="flex items-center justify-center w-[15px] h-[15px] bg-white border border-[#777]" aria-label="Scroll left"><svg width="5" height="7"><path d="M4.500 0v7L.5 3.500z" fill="#555"/></svg></button>
            <div class="flex-1 h-[15px] ml-[161px] mr-[61px] bg-white border border-[#777]"></div>
            <button class="flex items-center justify-center w-[15px] h-[15px] bg-white border border-[#777]" aria-label="Scroll right"><svg width="5" height="7"><path d="M.5 0v7l4-3.500z" fill="#555"/></svg></button>
        </div>
        <div class="w-[19px]"></div>
    </div>

    <!-- Status bar -->
    <footer class="flex items-center shrink-0 h-[22px] pl-[7px] pr-2 bg-[#f3f2f1] border-t border-[#c8c6c4]">
        <span>Page 1 of 1</span>
        <span class="ml-[21px]">0 words</span>
        <svg class="ml-[19px]" width="15" height="14" fill="none" stroke="#444"><path d="M7.500 11V2.500C6 1 3 1 .5 1.500v10h5L7.500 13M7.500 2.500C9 1 12 1 13.500 1.500V7M8 10l2.500 3 4-5"/></svg>
        <button class="flex items-center gap-[3px] ml-auto"><svg width="15" height="14" fill="none" stroke="#444"><path d="M3 .5H.5V3M12 .5h2.500V3M3 13.500H.5V11M12 13.500h2.500V11M4.500 2.500h4l3 3v6h-7zM8.500 2.500v3h3"/></svg>Focus</button>
        <button class="flex justify-center w-10 ml-3" aria-label="Read mode"><svg width="14" height="13" fill="none" stroke="#444"><path d="M7 1.500C5 .5 3 .5.5.5v11c2.500 0 4.500 0 6.500 1 2-1 4-1 6.500-1V.5C11 .5 9 .5 7 1.500zM7 1.500v11M2 3.500h3M2 6h3M2 8.500h3M9 3.500h3M9 6h3M9 8.500h3"/></svg></button>
        <button class="flex items-center justify-center w-10 h-[21px] bg-[#d2d0ce]" aria-label="Print layout"><svg width="11" height="14" fill="none" stroke="#444"><path d="M.5.5h10v13H.5zM2.500 3.500h6M2.500 5.500h6M2.500 7.500h6M2.500 9.500h6M2.500 11.500h6"/></svg></button>
        <button class="flex justify-center w-10" aria-label="Web layout"><svg width="15" height="14" fill="none" stroke="#444"><path d="M6 12.500H.5V.5h12V5M.5 3h12M2.500 5.500h6M2.500 7.500h4M2.500 9.500h3"/><circle cx="10.500" cy="9.500" r="4" fill="#ddd"/><path d="M10.500 5.500v8M6.500 9.500h8"/></svg></button>
        <button class="ml-[5px]" aria-label="Zoom out"><svg width="9" height="9" stroke="#444"><path d="M0 4.500h9"/></svg></button>
        <label class="relative flex items-center w-[100px] h-4 ml-[5px] bg-[linear-gradient(#444,#444)] bg-[length:100%_1px] bg-center bg-no-repeat">
            <span class="absolute left-1/2 w-px h-[5px] bg-[#444]"></span>
            <input type="range" min="0" max="100" value="62" aria-label="Zoom" class="relative w-full h-4 appearance-none bg-transparent [&::-webkit-slider-thumb]:appearance-none [&::-webkit-slider-thumb]:w-[5px] [&::-webkit-slider-thumb]:h-[11px] [&::-webkit-slider-thumb]:bg-[#777]">
        </label>
        <button class="ml-1" aria-label="Zoom in"><svg width="9" height="9" stroke="#444"><path d="M0 4.500h9M4.500 0v9"/></svg></button>
        <span class="w-[40px] text-right">190%</span>
    </footer>

    <!-- Desktop taskbar -->
    <div class="grid grid-cols-[1fr_auto_1fr] items-center shrink-0 h-12 bg-[linear-gradient(90deg,#e3eff8_0%,#dfebf8_18%,#d2e1fb_25%,#d8def7_31%,#d6e0fa_45%,#d8dbee_66%,#d8dcf2_74%,#e0ecf7_80%,#dfedfa_100%)] text-[11px] text-[#222]">
        <div class="flex items-center pl-5">
            <svg width="23" height="21"><use href="#weather"/></svg>
            <div class="ml-[9px]"><div>89°F</div><div class="text-[#555]">Smoke</div></div>
        </div>
        <div class="flex" id="taskbar"></div>
        <div class="flex items-center justify-end pr-5">
            <svg width="13" height="13"><use href="#up"/></svg>
            <svg class="ml-[9px]" width="17" height="12"><use href="#onedrive"/></svg>
            <svg class="ml-[11px]" width="16" height="12"><use href="#wifi"/></svg>
            <svg class="ml-2" width="16" height="13"><use href="#sound"/></svg>
            <svg class="ml-2" width="17" height="13"><use href="#battery"/></svg>
            <div class="ml-4 text-right">4:14 PM<br>10/25/2022</div>
        </div>
    </div>

    <script>
        // number, field, label, API name, type, note, disabled
        const fields = [
            [29, "Name", "Full Name", "Name__c", "Text"],
            [30, "OtherStreet", "Other Street", "OtherStreet__c", "Text"],
            [31, "Phone", "Business Phone", "Phone__c", "Text"],
            [32, "Physician_Reg...", "Physician Regi...", "Physician_Reg...", "Text"],
            [33, "Preferred_Na...", "Preferred Name", "Preferred_Na...", "Text"],
            [34, "Prefix__c", "Prefix", "Prefix_c__c", "Text"],
            [35, "RecordTypeId", "Record Type ID", "RecordTypeId...", "Text"],
            [36, "Salutation", "Salutation", "Salutation__c", "Text"],
            [37, "SfdcOrganizat...", "SfdcOrganizat...", "SfdcOrganizat...", "Text"],
            [38, "Source_ID__c", "Source ID", "Source_ID_c__c", "Text"],
            [39, "Suffix", "Suffix", "Suffix__c", "Text"],
            [40, "SystemModst...", "System Modst...", "SystemModst...", "DateTime", "Record<br>Modified Field"],
            [41, "", "Physician Regi...", "Physician_Reg...", "Text", "", true],
            [42, "", "Lead Source", "LeadSource__c", "Text", "", true],
            [43, "", "Secondary Em...", "Secondary_E...", "Text", "", true],
        ];

        document.getElementById("fields").innerHTML = fields.map(([no, name, label, api, type, note = "", off]) => {
            let height = "h-[26px]";
            if (no === 31 || no === 35 || no === 39) height = "h-[25px]";
            if (no === 40) height = "h-[37px]";
            const cell = "pl-2 whitespace-nowrap";
            return `<tr class="${height} text-[11px] leading-[14px] border-b border-[#e5e3e2]">
                <td class="pr-2 text-right text-[#777]">${no}</td>
                <td class="${cell}">${name}</td>
                <td class="${cell}">${label}</td>
                <td class="${cell}">${api}</td>
                <td class="${cell}">${type}</td>
                <td class="${cell}">${note}</td>
                <td>${off ? '<span class="block w-[58px] h-[19px] pl-2 text-[10px] leading-[19px] font-bold text-white bg-[#747474] rounded-full">Disabled</span>' : ""}</td>
                <td class="${no === 41 ? "outline-1 -outline-offset-1 outline-[#1b7fd0]" : ""}">
                    ${no > 41 ? "" : '<button class="flex items-center justify-center w-[18px] h-[17px] mx-auto bg-white border border-[#c9c7c5] rounded-sm" aria-label="Row actions"><svg width="9" height="6"><path d="M.5 1h8l-4 4.500z" fill="#706e6b"/></svg></button>'}
                </td>
            </tr>`;
        }).join("");

        const apps = ["start", "find", "tasks", "chat", "teams", "folder", "edge", "server", "rdp", "chrome", "notepad", "outlook"];
        const running = ["teams", "chrome", "notepad", "outlook"];

        document.getElementById("taskbar-small").innerHTML = apps.map(app => `
            <button class="relative flex items-center justify-center w-[38px] h-[41px]" aria-label="${app}">
                ${app === "chrome" ? '<span class="absolute inset-x-[3px] inset-y-1 bg-white/60 rounded-sm"></span>' : ""}
                <svg class="relative" width="${app === "teams" ? 25 : 21}" height="21"><use href="#${app}"/></svg>
                ${app === "chrome" ? '<span class="absolute bottom-[4px] w-3.5 h-[3px] bg-[#0078d4] rounded-full"></span>' : running.includes(app) ? '<span class="absolute bottom-[4px] w-[5px] h-[3px] bg-[#80868f] rounded-full"></span>' : ""}
            </button>`).join("");

        document.getElementById("taskbar").innerHTML = [...apps, "word"].map(app => `
            <button class="relative flex items-center justify-center w-11 h-12" aria-label="${app}">
                ${app === "word" ? '<span class="absolute inset-x-[3px] inset-y-[5px] bg-white/60 rounded-sm"></span>' : ""}
                <svg class="relative" width="${app === "teams" ? 28 : 24}" height="24"><use href="#${app}"/></svg>
                ${app === "word" ? '<span class="absolute bottom-[5px] w-4 h-[3px] bg-[#0078d4] rounded-full"></span>' : running.includes(app) ? '<span class="absolute bottom-[5px] w-1.5 h-[3px] bg-[#80868f] rounded-full"></span>' : ""}
            </button>`).join("");
    </script>
</body>
</html>
